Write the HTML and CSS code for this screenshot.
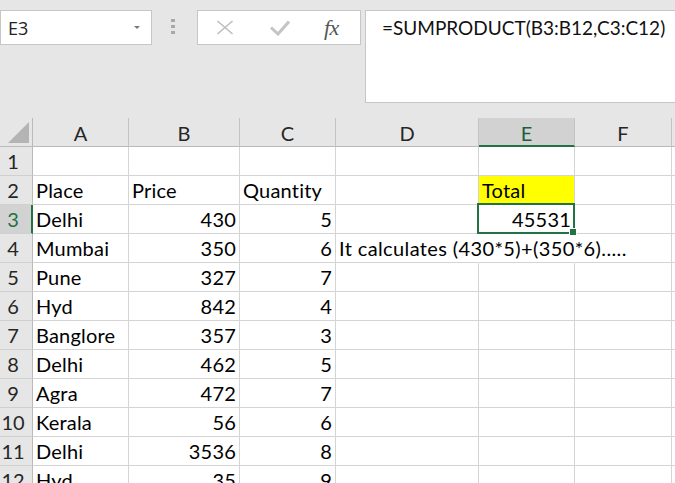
FILE: index.html
```html
<!DOCTYPE html>
<html>
<head>
<meta charset="utf-8">
<link rel="stylesheet" href="styles.css">
</head>
<body>
<div class="app">
  <div class="toolbar">
    <div class="namebox"><span class="ref">E3</span><span class="caret"></span></div>
    <div class="grip"><i></i><i></i><i></i></div>
    <div class="fxbox">
      <svg class="ic-x" width="18" height="15" viewBox="0 0 18 15"><path d="M1.5 1 L16.5 14 M16.5 1 L1.5 14" stroke="#bdbdbd" stroke-width="1.6" fill="none"/></svg>
      <svg class="ic-ok" width="20" height="16" viewBox="0 0 20 16"><path d="M1 7.5 L8 14 L19 1.5" stroke="#c4c4c4" stroke-width="3" fill="none"/></svg>
      <span class="fx">fx</span>
    </div>
    <div class="formula">=SUMPRODUCT(B3:B12,C3:C12)</div>
  </div>
  <div class="sheet">
    <div class="hd corner"><span class="tri"></span></div>
    <div class="hd col">A</div>
    <div class="hd col">B</div>
    <div class="hd col">C</div>
    <div class="hd col">D</div>
    <div class="hd col sel">E</div>
    <div class="hd col">F</div>
    <div class="hd col last"></div>

    <div class="hd row">1</div><div class="c"></div><div class="c"></div><div class="c"></div><div class="c"></div><div class="c"></div><div class="c"></div><div class="c"></div>

    <div class="hd row">2</div><div class="c">Place</div><div class="c">Price</div><div class="c">Quantity</div><div class="c"></div><div class="c yellow">Total</div><div class="c"></div><div class="c"></div>

    <div class="hd row rsel">3</div><div class="c">Delhi</div><div class="c n">430</div><div class="c n">5</div><div class="c"></div><div class="c n active">45531<span class="handle"></span></div><div class="c"></div><div class="c"></div>

    <div class="hd row">4</div><div class="c">Mumbai</div><div class="c n">350</div><div class="c n">6</div><div class="c spill"><span class="long">It calculates (430*5)+(350*6).....</span></div><div class="c spill"></div><div class="c"></div><div class="c"></div>

    <div class="hd row">5</div><div class="c">Pune</div><div class="c n">327</div><div class="c n">7</div><div class="c"></div><div class="c"></div><div class="c"></div><div class="c"></div>

    <div class="hd row">6</div><div class="c">Hyd</div><div class="c n">842</div><div class="c n">4</div><div class="c"></div><div class="c"></div><div class="c"></div><div class="c"></div>

    <div class="hd row">7</div><div class="c">Banglore</div><div class="c n">357</div><div class="c n">3</div><div class="c"></div><div class="c"></div><div class="c"></div><div class="c"></div>

    <div class="hd row">8</div><div class="c">Delhi</div><div class="c n">462</div><div class="c n">5</div><div class="c"></div><div class="c"></div><div class="c"></div><div class="c"></div>

    <div class="hd row">9</div><div class="c">Agra</div><div class="c n">472</div><div class="c n">7</div><div class="c"></div><div class="c"></div><div class="c"></div><div class="c"></div>

    <div class="hd row">10</div><div class="c">Kerala</div><div class="c n">56</div><div class="c n">6</div><div class="c"></div><div class="c"></div><div class="c"></div><div class="c"></div>

    <div class="hd row">11</div><div class="c">Delhi</div><div class="c n">3536</div><div class="c n">8</div><div class="c"></div><div class="c"></div><div class="c"></div><div class="c"></div>

    <div class="hd row">12</div><div class="c">Hyd</div><div class="c n">35</div><div class="c n">9</div><div class="c"></div><div class="c"></div><div class="c"></div><div class="c"></div>
  </div>
</div>
</body>
</html>
```
FILE: styles.css
```css
html, body {
  margin: 0;
  padding: 0;
  background: #e6e6e6;
}
.app {
  width: 675px;
  height: 483px;
  overflow: hidden;
  font-family: "Lato", "Liberation Sans", sans-serif;
}
.toolbar {
  display: flex;
  align-items: flex-start;
  height: 118px;
  box-sizing: border-box;
  padding-top: 10px;
  background: #e6e6e6;
}
.namebox {
  width: 152px;
  height: 35px;
  box-sizing: border-box;
  border: 1px solid #c6c6c6;
  background: #fff;
  display: flex;
  align-items: center;
  flex-shrink: 0;
}
.namebox .ref {
  font-family: "Open Sans", "Noto Sans", sans-serif;
  font-size: 18px;
  color: #222;
  padding-left: 7px;
}
.namebox .caret {
  margin-left: auto;
  margin-right: 11px;
  width: 0;
  height: 0;
  border-left: 3.5px solid transparent;
  border-right: 3.5px solid transparent;
  border-top: 3.5px solid #7a7a7a;
}
.grip {
  margin-left: 19px;
  margin-top: 9px;
  width: 4px;
  display: flex;
  flex-direction: column;
  gap: 3px;
  flex-shrink: 0;
}
.grip i {
  display: block;
  width: 4px;
  height: 3px;
  background: #a8a8a8;
}
.fxbox {
  margin-left: 22px;
  width: 164px;
  height: 35px;
  box-sizing: border-box;
  border: 1px solid #c6c6c6;
  background: #fff;
  display: flex;
  align-items: center;
  padding-left: 18px;
  flex-shrink: 0;
}
.ic-x { display: block; }
.ic-ok { display: block; margin-left: 36px; margin-top: 1px; }
.fx {
  margin-left: 34px;
  font-family: "Liberation Serif", "DejaVu Serif", serif;
  font-style: italic;
  font-size: 22px;
  color: #555;
  letter-spacing: -0.5px;
}
.formula {
  margin-left: 4px;
  flex: 1;
  height: 93px;
  box-sizing: border-box;
  border: 1px solid #c6c6c6;
  border-right: none;
  background: #fff;
  padding: 4px 0 0 16px;
  font-size: 19px;
  line-height: 26px;
  color: #111;
  white-space: nowrap;
}
.sheet {
  display: grid;
  grid-template-columns: 33px 96px 111px 96px 143px 96px 97px 1fr;
  grid-auto-rows: 29px;
  background: #fff;
  font-size: 20px;
  line-height: 28px;
  color: #000;
}
.c {
  box-sizing: border-box;
  border-right: 1px solid #d4d4d4;
  border-bottom: 1px solid #d4d4d4;
  padding: 0 3px;
  white-space: nowrap;
  position: relative;
  letter-spacing: 0.2px;
}
.c.n { text-align: right; }
.c.spill { border-right-color: transparent; overflow: visible; }
.long { letter-spacing: 0.38px; }
.c.yellow {
  background: #ffff00;
  border-bottom-color: #ffff00;
}
.c.active::after {
  content: "";
  position: absolute;
  left: -2px;
  top: -2px;
  right: -1px;
  bottom: -1px;
  border: 2px solid #217346;
  pointer-events: none;
}
.c.active .handle {
  position: absolute;
  right: -3px;
  bottom: -3px;
  width: 6px;
  height: 6px;
  background: #217346;
  border: 1px solid #fff;
  z-index: 2;
}
.hd {
  box-sizing: border-box;
  background: #e6e6e6;
  color: #262626;
  border-right: 1px solid #c4c4c4;
  border-bottom: 1px solid #bababa;
  text-align: center;
}
.hd.col { padding-top: 1px; }
.hd.last { border-right: none; }
.hd.sel {
  background: #d2d2d2;
  color: #1e5e3a;
  border-bottom: 2px solid #217346;
}
.hd.row {
  padding-right: 6px;
  border-right-color: #bababa;
  border-bottom-color: #d0d0d0;
}
.hd.rsel {
  background: #d2d2d2;
  color: #217346;
  border-right: 2px solid #217346;
  padding-right: 5px;
}
.corner {
  position: relative;
  border-right-color: #bababa;
}
.tri {
  position: absolute;
  left: 8px;
  bottom: 3px;
  width: 0;
  height: 0;
  border-left: 21px solid transparent;
  border-bottom: 21px solid #b4b4b4;
}
```
